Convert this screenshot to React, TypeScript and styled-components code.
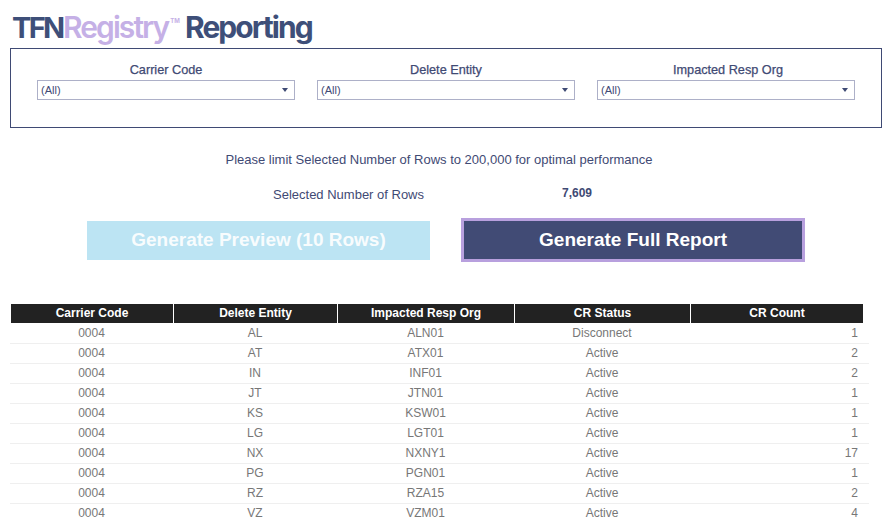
import React from 'react'
import styled, { createGlobalStyle } from 'styled-components'

const NAVY = '#3f4a74'
const LOGO_NAVY = '#3e4f79'
const LILAC = '#c5b0e6'
const COLUMNS = '163px 164px 177px 176px 173px 5px'

const GlobalStyle = createGlobalStyle`
  html, body {
    margin: 0;
    height: 522px;
    overflow: hidden;
    background: #fff;
    font-family: "Liberation Sans", Arial, sans-serif;
  }
`

const Page = styled.div`
  width: 894px;
  height: 522px;
  overflow: hidden;
`

const Logo = styled.div`
  display: flex;
  align-items: baseline;
  height: 48px;
  padding: 4px 0 0 12px;
  box-sizing: border-box;
  font-family: Inter, "Noto Sans", sans-serif;
  font-size: 30px;
  line-height: 47px;
  font-weight: 700;
  letter-spacing: -1.9px;
  color: ${LOGO_NAVY};
  white-space: nowrap;
`

const LogoStrong = styled.span`
  font-size: 29px;
  letter-spacing: -2.7px;
  margin-right: 0.5px;
`

const LogoAccent = styled.span`
  color: ${LILAC};
  font-weight: 600;
  letter-spacing: -1.9px;
`

const LogoMark = styled.span`
  align-self: flex-start;
  margin: 14px 5px 0 2px;
  font-size: 6px;
  line-height: 6px;
  letter-spacing: 0;
  color: ${LILAC};
`

const FilterPanel = styled.section`
  display: grid;
  grid-template-columns: repeat(3, 258px);
  column-gap: 22px;
  box-sizing: border-box;
  width: 872px;
  height: 80px;
  margin-left: 10px;
  padding: 13px 0 0 26px;
  border: 1px solid ${NAVY};
`

const FilterLabel = styled.div`
  height: 18px;
  font-size: 12.7px;
  line-height: 17px;
  text-align: center;
  color: ${NAVY};
  -webkit-text-stroke: 0.25px ${NAVY};
`

const Filter = styled.div`
  display: flex;
  flex-direction: column;

  &:last-child ${FilterLabel} {
    padding-left: 4px;
  }
`

const Dropdown = styled.div`
  display: flex;
  align-items: center;
  justify-content: space-between;
  box-sizing: border-box;
  height: 20px;
  padding: 0 6px 0 3px;
  border: 1px solid #adb0c8;
  font-size: 11px;
  color: ${NAVY};
`

const Caret = styled.span`
  width: 0;
  height: 0;
  border-left: 3.5px solid transparent;
  border-right: 3.5px solid transparent;
  border-top: 4px solid ${NAVY};
`

const Notice = styled.p`
  margin: 24px 0 0;
  padding-right: 16px;
  font-size: 13px;
  line-height: 15px;
  text-align: center;
  color: ${NAVY};
`

const RowCountLine = styled.div`
  display: flex;
  align-items: center;
  height: 16px;
  margin-top: 19px;
  padding-left: 273px;
  font-size: 13px;
  color: ${NAVY};
`

const RowCountValue = styled.strong`
  margin: -3px 0 0 138px;
  font-size: 12px;
`

const Actions = styled.div`
  display: flex;
  align-items: center;
  gap: 31px;
  margin-top: 16px;
  padding-left: 87px;
`

const ActionButton = styled.button<{ $primary?: boolean }>`
  box-sizing: border-box;
  width: ${p => (p.$primary ? '344px' : '343px')};
  height: ${p => (p.$primary ? '44px' : '39px')};
  border: ${p => (p.$primary ? '3px solid #b8a0de' : '0')};
  padding: 0;
  background: ${p => (p.$primary ? '#414b75' : '#bce4f3')};
  color: ${p => (p.$primary ? '#fff' : 'rgba(255, 255, 255, 0.92)')};
  font-family: inherit;
  font-size: 19px;
  font-weight: 700;
`

const Table = styled.div`
  margin: 42px 0 0 10px;
  width: 859px;
`

const HeaderRow = styled.div`
  display: grid;
  grid-template-columns: ${COLUMNS};
  height: 20px;
`

const HeaderCell = styled.div`
  height: 19px;
  margin-left: 1px;
  background: #222;
  color: #fff;
  font-size: 12px;
  font-weight: 700;
  line-height: 18px;
  text-align: center;
`

const BodyRow = styled.div`
  display: grid;
  grid-template-columns: ${COLUMNS};
  box-sizing: border-box;
  height: 20px;
  border-bottom: 1px solid #efefef;
`

const BodyCell = styled.div<{ $end?: boolean }>`
  padding-right: ${p => (p.$end ? '5px' : '0')};
  color: #777;
  font-size: 12px;
  line-height: 19px;
  text-align: ${p => (p.$end ? 'right' : 'center')};
`

const filters = ['Carrier Code', 'Delete Entity', 'Impacted Resp Org']
const headings = ['Carrier Code', 'Delete Entity', 'Impacted Resp Org', 'CR Status', 'CR Count']
const rows = [
  ['0004', 'AL', 'ALN01', 'Disconnect', '1'],
  ['0004', 'AT', 'ATX01', 'Active', '2'],
  ['0004', 'IN', 'INF01', 'Active', '2'],
  ['0004', 'JT', 'JTN01', 'Active', '1'],
  ['0004', 'KS', 'KSW01', 'Active', '1'],
  ['0004', 'LG', 'LGT01', 'Active', '1'],
  ['0004', 'NX', 'NXNY1', 'Active', '17'],
  ['0004', 'PG', 'PGN01', 'Active', '1'],
  ['0004', 'RZ', 'RZA15', 'Active', '2'],
  ['0004', 'VZ', 'VZM01', 'Active', '4'],
]

const App: React.FC = () => (
  <Page>
    <GlobalStyle />
    <Logo>
      <LogoStrong>TFN</LogoStrong>
      <LogoAccent>Registry</LogoAccent>
      <LogoMark>TM</LogoMark>
      Reporting
    </Logo>
    <FilterPanel>
      {filters.map(label => (
        <Filter key={label}>
          <FilterLabel>{label}</FilterLabel>
          <Dropdown>
            (All)
            <Caret />
          </Dropdown>
        </Filter>
      ))}
    </FilterPanel>
    <Notice>Please limit Selected Number of Rows to 200,000 for optimal performance</Notice>
    <RowCountLine>
      Selected Number of Rows
      <RowCountValue>7,609</RowCountValue>
    </RowCountLine>
    <Actions>
      <ActionButton>Generate Preview (10 Rows)</ActionButton>
      <ActionButton $primary>Generate Full Report</ActionButton>
    </Actions>
    <Table>
      <HeaderRow>
        {headings.map(heading => (
          <HeaderCell key={heading}>{heading}</HeaderCell>
        ))}
      </HeaderRow>
      {rows.map(row => (
        <BodyRow key={row[2]}>
          {row.map((value, index) => (
            <BodyCell key={index} $end={index === 4}>
              {value}
            </BodyCell>
          ))}
        </BodyRow>
      ))}
    </Table>
  </Page>
)

export default App
